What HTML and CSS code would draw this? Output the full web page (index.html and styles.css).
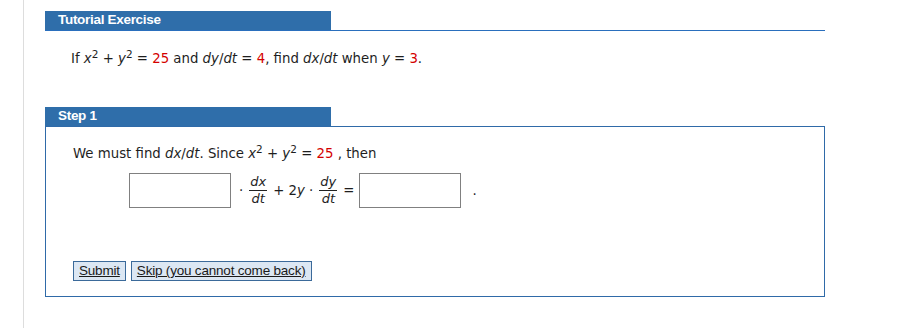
FILE: index.html
```html
<!DOCTYPE html>
<html>
<head>
<meta charset="utf-8">
<link rel="stylesheet" href="styles.css">
</head>
<body>
<div class="page">
  <div class="section-head">
    <div class="tab">Tutorial Exercise</div>
  </div>
  <p class="question">If <i>x</i><sup>2</sup> + <i>y</i><sup>2</sup> = <span class="red">25</span> and <i>dy</i>/<i>dt</i> = <span class="red">4</span>, find <i>dx</i>/<i>dt</i> when <i>y</i> = <span class="red">3</span>.</p>

  <div class="step">
    <div class="tab step-tab">Step 1</div>
    <div class="step-box">
      <p class="intro">We must find <i>dx</i>/<i>dt</i>. Since <i>x</i><sup>2</sup> + <i>y</i><sup>2</sup> = <span class="red">25</span> , then</p>
      <div class="eq">
        <span class="answer"></span>
        <span class="op dot">·</span>
        <span class="frac"><span class="num"><i>dx</i></span><span class="den"><i>dt</i></span></span>
        <span class="op plus">+ 2<i>y</i> ·</span>
        <span class="frac"><span class="num"><i>dy</i></span><span class="den"><i>dt</i></span></span>
        <span class="op eqs">=</span>
        <span class="answer"></span>
        <span class="period">.</span>
      </div>
      <div class="buttons">
        <span class="btn">Submit</span>
        <span class="btn">Skip (you cannot come back)</span>
      </div>
    </div>
  </div>
</div>
</body>
</html>
```
FILE: styles.css
```css
html, body {
  margin: 0;
  padding: 0;
  background: #ffffff;
}
body {
  font-family: "DejaVu Sans", Verdana, sans-serif;
  font-size: 13.3px;
  color: #1e1e1e;
}
.page {
  margin-left: 23px;
  border-left: 1px solid #dddddd;
  padding: 11px 0 0 21px;
  width: 780px;
  min-height: 317px;
}
.section-head {
  border-bottom: 1px solid #2a6fbd;
}
.tab {
  width: 273px;
  height: 19px;
  padding-left: 13px;
  background: #2f6eaa;
  color: #ffffff;
  font-family: "Liberation Sans", Arial, sans-serif;
  font-weight: bold;
  font-size: 13.5px;
  line-height: 18px;
  letter-spacing: -0.3px;
}
.question {
  margin: 20px 0 0 26px;
  line-height: 16px;
}
sup {
  font-size: 10.5px;
  line-height: 0;
  vertical-align: 5px;
}
.red {
  color: #d40000;
}
.step {
  margin-top: 40px;
}
.step-box {
  border: 1px solid #2f6aa8;
  height: 169px;
  padding-left: 27px;
}
.intro {
  margin: 19px 0 0 0;
  line-height: 16px;
}
.eq {
  display: flex;
  align-items: center;
  margin: 11px 0 0 56px;
  height: 35px;
}
.answer {
  display: block;
  box-sizing: border-box;
  width: 102px;
  height: 35px;
  border: 1px solid #808080;
  background: #ffffff;
}
.op {
  white-space: nowrap;
}
.dot {
  margin-left: 8px;
}
.frac {
  display: inline-flex;
  flex-direction: column;
  align-items: center;
  margin-left: 6px;
  font-size: 13px;
  line-height: 14px;
}
.frac .num {
  border-bottom: 1px solid #222222;
  padding: 0 1px 1px;
}
.frac .den {
  padding: 1px 1px 0;
}
.plus {
  margin-left: 6px;
}
.eqs {
  margin-left: 6px;
  margin-right: 5px;
}
.period {
  margin-left: 11px;
}
.buttons {
  display: flex;
  gap: 5px;
  margin-top: 53px;
  margin-left: 0;
}
.btn {
  display: block;
  height: 20px;
  box-sizing: border-box;
  padding: 0 5px;
  border: 1px solid #3b6a9a;
  background: #dce7f3;
  color: #1a1a1a;
  font-family: "Liberation Sans", Arial, sans-serif;
  font-size: 13.5px;
  line-height: 18px;
  text-decoration: underline;
  letter-spacing: -0.2px;
}
```
